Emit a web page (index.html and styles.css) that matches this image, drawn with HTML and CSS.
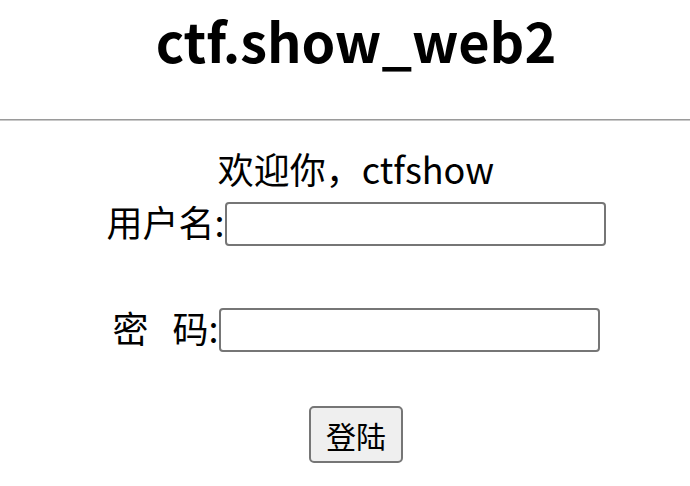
FILE: index.html
```html
<!DOCTYPE html>
<html lang="zh-CN">
<head>
<meta charset="UTF-8">
<title>ctf.show_web2</title>
<link rel="stylesheet" href="styles.css">
</head>
<body>
<header class="head">
  <h1 class="title">ctf.show_web2</h1>
</header>
<hr class="rule">
<form class="login" method="post">
  <div class="welcome">欢迎你，ctfshow</div>
  <div class="row row-user">
    <label class="label" for="u">用户名:</label><input class="field" id="u" type="text" name="username">
  </div>
  <div class="row row-pass">
    <label class="label" for="p">密&nbsp;&nbsp;&nbsp;码:</label><input class="field" id="p" type="password" name="password">
  </div>
  <div class="row row-btn">
    <button class="btn" type="submit">登陆</button>
  </div>
</form>
</body>
</html>
```

FILE: styles.css
```css
html, body {
  margin: 0;
  padding: 0;
  background: #fff;
  overflow: hidden;
}
body {
  width: 690px;
  height: 486px;
  font-family: "Noto Sans CJK SC", "Noto Sans", sans-serif;
  color: #000;
}
.head {
  padding-left: 22px;
  text-align: center;
}
.title {
  margin: 0;
  padding: 0;
  font-size: 54px;
  line-height: 79px;
  font-weight: 700;
}
.rule {
  margin: 40px 0 0 0;
  border: 0;
  border-top: 1px solid #9a9a9a;
  border-bottom: 1px solid #c8c8c8;
  height: 0;
}
.login {
  padding-left: 22px;
  display: flex;
  flex-direction: column;
  align-items: center;
  font-size: 36px;
}
.welcome {
  margin-top: 21px;
  line-height: 52px;
}
.row {
  display: flex;
  align-items: center;
}
.row-user { margin-top: 8px; }
.row-pass { margin-top: 62px; }
.row-btn { margin-top: 54px; }
.label {
  line-height: 44px;
  margin-top: -6px;
}
.field {
  width: 381px;
  height: 44px;
  box-sizing: border-box;
  border: 2px solid #767676;
  border-radius: 4px;
  padding: 2px 4px;
  font-size: 26px;
  background: #fff;
  margin: 0;
}
.btn {
  width: 94px;
  height: 57px;
  box-sizing: border-box;
  border: 2px solid #767676;
  border-radius: 5px;
  background: #efefef;
  font-family: inherit;
  font-size: 30px;
  padding: 0;
  line-height: 1;
  color: #000;
}
```
